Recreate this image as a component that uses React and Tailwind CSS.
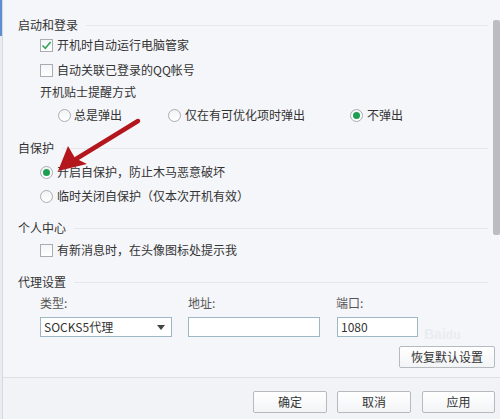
import React from "react";

function Check({ checked }) {
  return (
    <span className="w-[13px] h-[13px] border border-[#a9adb3] bg-gradient-to-b from-[#f4f5f7] to-[#ffffff] flex items-center justify-center shrink-0">
      {checked && (
        <svg width="11" height="11" viewBox="0 0 11 11">
          <path d="M1.5 5.5 L4.3 8.3 L9.6 2" fill="none" stroke="#38a35a" strokeWidth="1.6" />
        </svg>
      )}
    </span>
  );
}

function Radio({ checked }) {
  return (
    <span className="w-[13px] h-[13px] rounded-full border border-[#a9adb3] bg-gradient-to-b from-[#f2f3f5] to-[#ffffff] flex items-center justify-center shrink-0">
      {checked && <span className="w-[7px] h-[7px] rounded-full bg-[#1e9e52]" />}
    </span>
  );
}

function Heading({ children, className = "" }) {
  return (
    <div className={"h-[20px] flex items-center " + className}>
      <span className="text-[12px] text-[#333] leading-none">{children}</span>
      <span className="flex-1 h-px bg-[#e4e7ec] ml-[8px]" />
    </div>
  );
}

function Btn({ children, className = "" }) {
  return (
    <div
      className={
        "h-[22px] border border-[#b5b9c0] rounded-[2px] bg-gradient-to-b from-[#ffffff] to-[#f3f4f6] flex items-center justify-center text-[12px] text-[#333] leading-none " +
        className
      }
    >
      {children}
    </div>
  );
}

export default function App() {
  return (
    <div className="w-[500px] h-[419px] relative overflow-hidden bg-[#f5f6fa] font-['Noto_Sans_CJK_SC','Noto_Sans',sans-serif] flex">
      <div className="w-[2px] flex flex-col shrink-0">
        <div className="h-[36px] bg-[#5b8fd0]" />
        <div className="flex-1 bg-[#e9ecf1]" />
      </div>
      <div className="w-px bg-[#d3d9e1] shrink-0" />
      <div className="flex-1 flex flex-col">
        <div className="h-[377px] flex flex-col pl-[15px] pr-[12px] pt-[15px]">
          <Heading>启动和登录</Heading>
          <div className="h-[20px] flex items-center gap-[4px] pl-[22px] text-[12px] text-[#333] leading-none">
            <Check checked />
            <span>开机时自动运行电脑管家</span>
          </div>
          <div className="h-[20px] mt-[5px] flex items-center gap-[4px] pl-[22px] text-[12px] text-[#333] leading-none">
            <Check />
            <span>自动关联已登录的QQ帐号</span>
          </div>
          <div className="h-[20px] mt-[2px] flex items-center pl-[22px] text-[12px] text-[#333] leading-none">
            开机贴士提醒方式
          </div>
          <div className="h-[20px] mt-[3px] flex items-center pl-[40px] text-[12px] text-[#333] leading-none">
            <div className="w-[110px] flex items-center gap-[3px]">
              <Radio />
              <span>总是弹出</span>
            </div>
            <div className="w-[182px] flex items-center gap-[4px]">
              <Radio />
              <span>仅在有可优化项时弹出</span>
            </div>
            <div className="flex items-center gap-[4px]">
              <Radio checked />
              <span>不弹出</span>
            </div>
          </div>

          <Heading className="mt-[13px]">自保护</Heading>
          <div className="h-[20px] mt-[4px] flex items-center gap-[4px] pl-[22px] text-[12px] text-[#333] leading-none">
            <Radio checked />
            <span>开启自保护，防止木马恶意破坏</span>
          </div>
          <div className="h-[20px] mt-[4px] flex items-center gap-[4px] pl-[22px] text-[12px] text-[#333] leading-none">
            <Radio />
            <span>临时关闭自保护（仅本次开机有效）</span>
          </div>

          <Heading className="mt-[12px]">个人中心</Heading>
          <div className="h-[20px] mt-[2px] flex items-center gap-[4px] pl-[22px] text-[12px] text-[#333] leading-none">
            <Check />
            <span>有新消息时，在头像图标处提示我</span>
          </div>

          <Heading className="mt-[12px]">代理设置</Heading>
          <div className="h-[20px] mt-[1px] flex items-center pl-[22px] text-[12px] text-[#555] leading-none">
            <span className="w-[148px]">类型:</span>
            <span className="w-[148px]">地址:</span>
            <span>端口:</span>
          </div>
          <div className="h-[20px] mt-[4px] flex items-center pl-[22px]">
            <div className="w-[132px] h-[20px] border border-[#9db8c4] bg-white flex items-center justify-between pl-[3px] pr-[6px] text-[12px] text-[#333] leading-none">
              <span>SOCKS5代理</span>
              <svg width="8" height="5" viewBox="0 0 8 5">
                <path d="M0 0 L8 0 L4 5 Z" fill="#444" />
              </svg>
            </div>
            <div className="w-[132px] h-[20px] ml-[16px] border border-[#9db8c4] bg-white" />
            <div className="w-[81px] h-[20px] ml-[17px] border border-[#9db8c4] bg-white flex items-center pl-[3px] text-[12px] text-[#333] leading-none">
              1080
            </div>
          </div>
          <div className="flex justify-end mt-[9px] mr-[-7px]">
            <Btn className="w-[96px]">恢复默认设置</Btn>
          </div>
        </div>
        <div className="h-px bg-[#dde1e7]" />
        <div className="flex-1 bg-[#f1f3f7] flex items-start justify-end pt-[13px] pr-[5px]">
          <Btn className="w-[74px]">确定</Btn>
          <Btn className="w-[74px] ml-[10px]">取消</Btn>
          <Btn className="w-[73px] ml-[11px]">应用</Btn>
        </div>
      </div>

      <div className="absolute right-0 top-[20px] w-[7px] h-[215px] bg-[#bcbdc2] rounded-[2px]" />

      <div className="absolute left-[424px] top-[327px] text-[14px] font-bold text-[#e9ecf0] leading-none pointer-events-none font-['Liberation_Sans',sans-serif]">
        Bai<span className="text-[12px]">du</span>
      </div>

      <svg className="absolute left-0 top-0 pointer-events-none" width="500" height="419" viewBox="0 0 500 419">
        <line x1="138" y1="121" x2="76" y2="159" stroke="#b3161c" strokeWidth="4.5" strokeLinecap="round" />
        <path d="M58 171 L68 146 L75 158 L87 164 Z" fill="#b3161c" />
      </svg>
    </div>
  );
}
